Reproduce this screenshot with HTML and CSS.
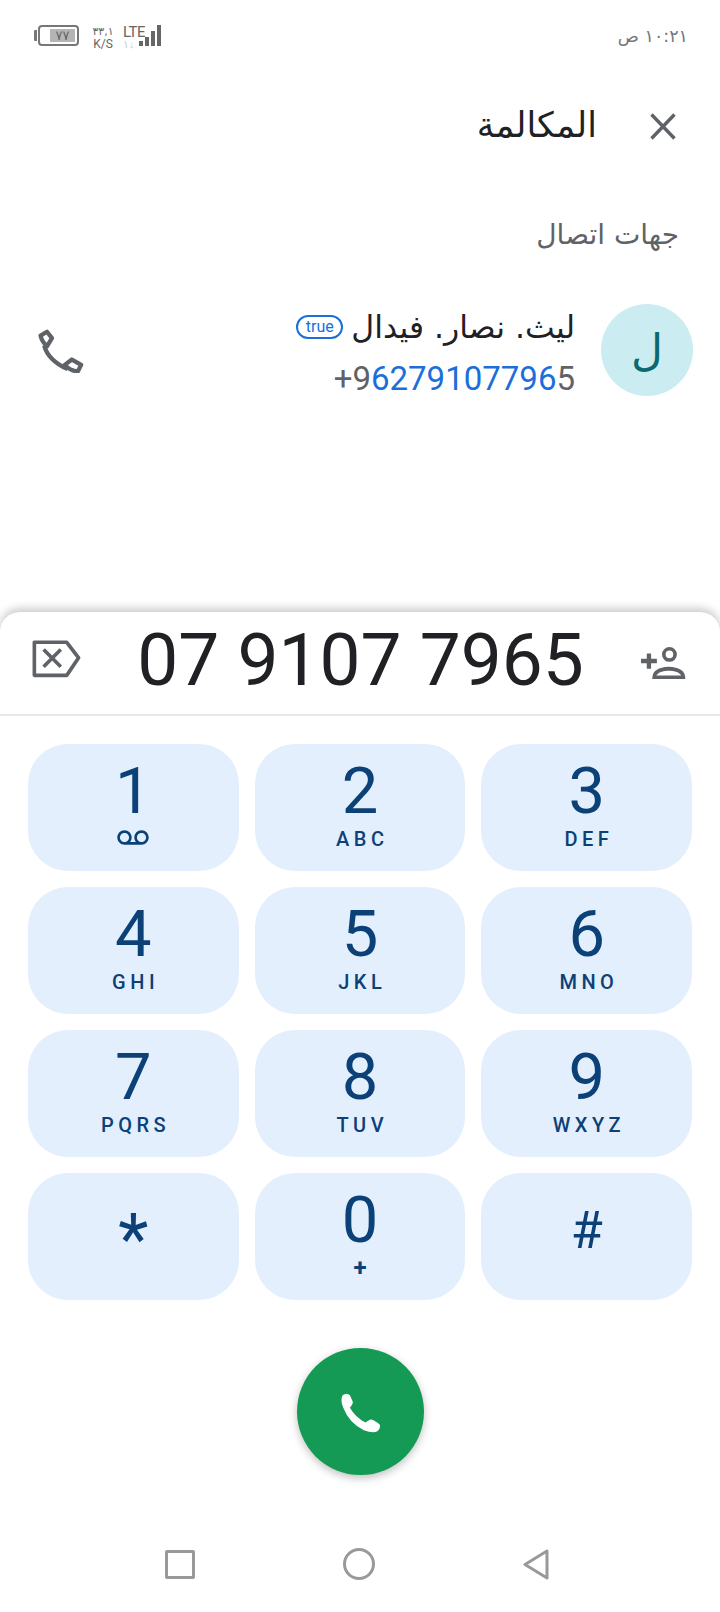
FILE: index.html
```html
<!DOCTYPE html>
<html lang="ar" dir="rtl">
<head>
    <meta charset="UTF-8">
    <meta name="viewport" content="width=device-width, initial-scale=1.0">
    <title>المكالمة</title>
    <link rel="stylesheet" href="styles.css">
</head>
<body>
    <div class="top">
        <!-- Status bar -->
        <div class="status">
            <span class="time">١٠:٢١ ص</span>
            <div class="status-left" dir="ltr">
                <div class="battery">
                    <span class="battery-nub"></span>
                    <div class="battery-body"><span class="battery-fill">٧٧</span></div>
                </div>
                <div class="speed"><span>٣٣,١</span><span>K/S</span></div>
                <div class="net"><span class="lte">LTE</span><span class="arrows">١↓</span></div>
                <div class="signal">
                    <span class="bar bar-1"></span>
                    <span class="bar bar-2"></span>
                    <span class="bar bar-3"></span>
                    <span class="bar bar-4"></span>
                </div>
            </div>
        </div>

        <!-- Title -->
        <div class="appbar">
            <svg class="close-icon" viewBox="0 0 26 27"><path d="M1.5 1.5 24.5 25.5M24.5 1.5 1.5 25.5"/></svg>
            <h1>المكالمة</h1>
        </div>

        <h2 class="label">جهات اتصال</h2>

        <!-- Contact -->
        <div class="contact">
            <div class="avatar">ل</div>
            <div class="contact-info">
                <div class="name-row">
                    <span class="name">ليث. نصار. فيدال</span>
                    <span class="badge" dir="ltr">true</span>
                </div>
                <div class="phone" dir="ltr">+9<span class="match">6279107796</span>5</div>
            </div>
            <svg class="contact-call" viewBox="60 24 132 122">
                <path d="M70 42 88 31 102 49 88 72Q73 58 70 42Z"/>
                <path d="M80 70Q92 112 146 136"/>
                <path d="M138 124 158 109 184 124 175 142Q154 142 138 124Z"/>
            </svg>
        </div>
    </div>

    <!-- Dialer -->
    <div class="dialer" dir="ltr">
        <div class="number-row">
            <svg class="backspace" viewBox="30 40 155 118">
                <path d="M42 50H140L176 97 140 150H42Z"/>
                <path d="M70 72 122 124M122 72 70 124"/>
            </svg>
            <div class="number">07 9107 7965</div>
            <svg class="add-contact" viewBox="30 30 145 108">
                <circle cx="122" cy="58" r="17"/>
                <path d="M76 127Q78 103 120 101 162 103 164 127Z"/>
                <path class="plus" d="M36 78H84M60 55V101"/>
            </svg>
        </div>

        <div class="keypad">
            <div class="key"><span class="digit">1</span>
                <svg class="voicemail" viewBox="0 5 24 13"><path d="M18.5 6C15.46 6 13 8.46 13 11.5c0 1.33.47 2.55 1.26 3.5H9.74c.79-.95 1.26-2.17 1.26-3.5C11 8.46 8.54 6 5.5 6S0 8.46 0 11.5 2.46 17 5.5 17h13c3.04 0 5.5-2.46 5.5-5.5S21.54 6 18.5 6zm-13 9C3.57 15 2 13.43 2 11.5S3.57 8 5.5 8 9 9.57 9 11.5 7.43 15 5.5 15zm13 0c-1.93 0-3.5-1.57-3.5-3.5S16.57 8 18.5 8 22 9.57 22 11.5 20.43 15 18.5 15z"/></svg>
            </div>
            <div class="key"><span class="digit">2</span><span class="letters">ABC</span></div>
            <div class="key"><span class="digit">3</span><span class="letters">DEF</span></div>
            <div class="key"><span class="digit">4</span><span class="letters">GHI</span></div>
            <div class="key"><span class="digit">5</span><span class="letters">JKL</span></div>
            <div class="key"><span class="digit">6</span><span class="letters">MNO</span></div>
            <div class="key"><span class="digit">7</span><span class="letters">PQRS</span></div>
            <div class="key"><span class="digit">8</span><span class="letters">TUV</span></div>
            <div class="key"><span class="digit">9</span><span class="letters">WXYZ</span></div>
            <div class="key key-star"><span class="digit">*</span></div>
            <div class="key"><span class="digit">0</span><span class="letters letters-plus">+</span></div>
            <div class="key key-hash"><span class="digit">#</span></div>
        </div>

        <div class="call-row">
            <div class="call-btn">
                <svg viewBox="55 30 130 125"><path d="M66 42Q78 32 88 42L97 62Q97 68 88 80 105 110 135 124L148 116Q155 112 178 130 182 140 172 150 160 158 130 148 85 125 68 80 58 55 66 42Z"/></svg>
            </div>
        </div>

        <!-- Navigation bar -->
        <div class="navbar">
            <span class="nav-square"></span>
            <span class="nav-circle"></span>
            <svg class="nav-back" viewBox="0 0 26 31"><path d="M24 2V29L2 15.500Z"/></svg>
        </div>
    </div>
</body>
</html>
```

FILE: styles.css
```css
* {
    margin: 0;
    padding: 0;
    box-sizing: border-box;
}

html, body {
    width: 720px;
    height: 1612px;
    overflow: hidden;
}

body {
    font-family: "DejaVu Sans", sans-serif;
    background: #fff;
    color: #202124;
}

.top {
    height: 612px;
}

/* Status bar */
.status {
    height: 72px;
    padding: 25px 32px 0 34px;
    display: flex;
    justify-content: space-between;
    align-items: flex-start;
}

.time {
    font-size: 17.5px;
    line-height: 22px;
    color: #777;
}

.status-left {
    display: flex;
    align-items: flex-start;
    font-family: Roboto, sans-serif;
    color: #666;
}

.battery {
    display: flex;
    align-items: center;
    height: 21px;
}

.battery-nub {
    width: 3px;
    height: 11px;
    background: #777;
    border-radius: 1px 0 0 1px;
    margin-right: 1px;
}

.battery-body {
    width: 41px;
    height: 21px;
    border: 2px solid #777;
    border-radius: 4px;
    padding: 2px 3px 2px 10px;
}

.battery-fill {
    display: block;
    width: 25px;
    height: 13px;
    background: #b5b5b5;
    font-family: "DejaVu Sans", sans-serif;
    font-size: 13px;
    line-height: 13px;
    text-align: center;
    color: #666;
}

.speed {
    margin-left: 12px;
    width: 24px;
    display: flex;
    flex-direction: column;
    align-items: center;
    font-size: 12px;
    line-height: 13px;
}

.speed span:first-child {
    font-family: "DejaVu Sans", sans-serif;
    font-size: 11px;
}

.net {
    margin-left: 8px;
    width: 22px;
    display: flex;
    flex-direction: column;
}

.lte {
    font-size: 15px;
    line-height: 14px;
    letter-spacing: -0.5px;
}

.arrows {
    font-size: 11px;
    line-height: 11px;
    color: #ccc;
}

.signal {
    margin-left: -6px;
    height: 21px;
    display: flex;
    align-items: flex-end;
    gap: 2px;
}

.bar {
    width: 4px;
    background: #666;
}

.bar-1 { height: 5px; }
.bar-2 { height: 9px; }
.bar-3 { height: 15px; }
.bar-4 { height: 21px; }

/* Title */
.appbar {
    height: 106px;
    padding-right: 43px;
    display: flex;
    align-items: center;
    gap: 52px;
}

.close-icon {
    width: 28px;
    height: 27px;
    margin-top: 3px;
    fill: none;
    stroke: #5f6368;
    stroke-width: 3.4;
}

h1 {
    font-size: 35px;
    font-weight: 400;
    line-height: 44px;
    color: #202124;
}

.label {
    margin-top: 37px;
    padding-right: 41px;
    font-size: 28px;
    font-weight: 400;
    line-height: 40px;
    color: #5f6368;
}

/* Contact row */
.contact {
    margin-top: 46px;
    padding: 0 27px 0 37px;
    display: flex;
    align-items: center;
}

.avatar {
    width: 92px;
    height: 92px;
    border-radius: 50%;
    background: #cbecf0;
    color: #0a6a70;
    font-size: 44px;
    display: flex;
    align-items: center;
    justify-content: center;
    flex-shrink: 0;
}

.contact-info {
    margin-right: 26px;
    padding-top: 4px;
    align-self: flex-start;
}

.name-row {
    display: flex;
    align-items: center;
    gap: 8px;
    height: 44px;
}

.name {
    font-size: 31.5px;
    line-height: 44px;
    color: #202124;
}

.badge {
    height: 24px;
    width: 47px;
    border: 2px solid #1a6fdc;
    border-radius: 12px;
    font-family: Roboto, sans-serif;
    font-size: 16px;
    line-height: 19px;
    text-align: center;
    color: #1a6fdc;
}

.phone {
    margin-top: 11px;
    font-family: Roboto, sans-serif;
    font-size: 33px;
    line-height: 38px;
    color: #5f6368;
    text-align: right;
}

.match {
    color: #1a6fdc;
}

.contact-call {
    width: 47px;
    height: 44px;
    margin-top: 2px;
    margin-right: auto;
    fill: none;
    stroke: #5f6368;
    stroke-width: 12;
    stroke-linejoin: round;
}

/* Dialer */
.dialer {
    height: 1000px;
    background: #fff;
    border-radius: 20px 20px 0 0;
    box-shadow: 0 -4px 8px rgba(0,0,0,0.2);
    font-family: Roboto, sans-serif;
}

.number-row {
    height: 104px;
    padding: 0 33px 0 30px;
    border-bottom: 2px solid #e8e8e8;
    display: flex;
    justify-content: space-between;
    align-items: center;
}

.backspace {
    width: 52px;
    height: 39px;
    margin-bottom: 10px;
    fill: none;
    stroke: #5f6368;
    stroke-width: 11;
    stroke-linejoin: round;
}

.number {
    font-size: 73px;
    line-height: 84px;
    margin-bottom: 6px;
    color: #202124;
}

.add-contact {
    width: 48px;
    height: 36px;
    fill: none;
    stroke: #5f6368;
    stroke-width: 11;
}

.add-contact .plus {
    stroke-width: 13;
}

.keypad {
    padding: 28px 28px 0;
    display: grid;
    grid-template-columns: repeat(3, 1fr);
    grid-auto-rows: 127px;
    gap: 16px;
}

.key {
    background: #e3effd;
    border-radius: 40px;
    padding-top: 16px;
    display: flex;
    flex-direction: column;
    align-items: center;
    color: #0b4177;
}

.digit {
    font-size: 65px;
    line-height: 62px;
}

.letters {
    margin-top: 7px;
    font-size: 20px;
    line-height: 20px;
    font-weight: 500;
    letter-spacing: 4.5px;
    margin-right: -4.5px;
}

.letters-plus {
    font-size: 24px;
    font-weight: 700;
}

.voicemail {
    width: 32px;
    height: 17px;
    margin-top: 7px;
    fill: #0b4177;
}

.key-star .digit {
    font-size: 70px;
    line-height: 70px;
    margin-top: 15px;
}

.key-hash {
    padding-top: 27px;
}

.key-hash .digit {
    font-size: 52px;
}

.call-row {
    padding-top: 48px;
    display: flex;
    justify-content: center;
}

.call-btn {
    width: 127px;
    height: 127px;
    border-radius: 50%;
    background: #149a55;
    box-shadow: 0 3px 8px rgba(0,0,0,0.25);
    display: flex;
    align-items: center;
    justify-content: center;
}

.call-btn svg {
    width: 43px;
    height: 42px;
    fill: #fff;
}

/* Navigation bar */
.navbar {
    margin-top: 73px;
    padding-right: 6px;
    display: flex;
    justify-content: center;
    align-items: center;
    gap: 148px;
}

.nav-square {
    width: 30px;
    height: 29px;
    border: 3px solid #999;
    border-radius: 2px;
}

.nav-circle {
    width: 32px;
    height: 32px;
    border: 3px solid #999;
    border-radius: 50%;
}

.nav-back {
    width: 26px;
    height: 31px;
    fill: none;
    stroke: #999;
    stroke-width: 3;
    stroke-linejoin: round;
}
```
